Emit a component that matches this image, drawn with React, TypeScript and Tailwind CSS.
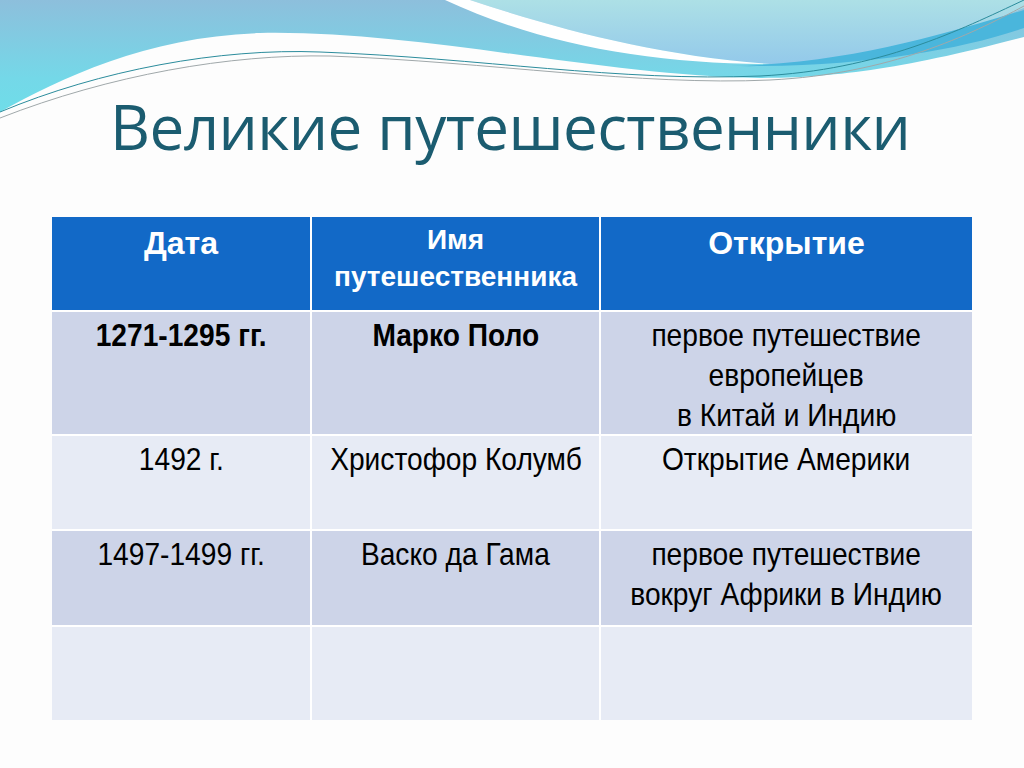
import React from "react";

const rows = [
  { date: "1271-1295 гг.", name: "Марко Поло", what: ["первое путешествие", "европейцев", "в Китай и Индию"], bold: true },
  { date: "1492 г.", name: "Христофор Колумб", what: ["Открытие Америки"] },
  { date: "1497-1499 гг.", name: "Васко да Гама", what: ["первое путешествие", "вокруг Африки в Индию"] },
  { date: "", name: "", what: [] as string[] },
];

function Waves() {
  return (
    <svg className="absolute left-0 top-0" width="1024" height="130" viewBox="0 0 1024 130">
      <defs>
        <linearGradient id="lb" x1="0" y1="0" x2="0" y2="1">
          <stop offset="0" stopColor="#8dbfdc" />
          <stop offset="0.7" stopColor="#74d8e8" />
          <stop offset="1" stopColor="#6fdde9" />
        </linearGradient>
        <linearGradient id="rb" x1="0" y1="0" x2="0" y2="1">
          <stop offset="0" stopColor="#ade0e6" />
          <stop offset="1" stopColor="#93c9ea" />
        </linearGradient>
      </defs>
      <path d="M0,0 H1024 V37 C900,70 830,78 760,78 C600,76 420,30 260,33 C150,36 60,78 0,112 Z" fill="url(#lb)" />
      <path d="M470,0 H1024 V8 C970,30 880,66 770,64 C660,56 560,30 470,0 Z" fill="url(#rb)" />
      <path d="M445,0 L470,0 C560,30 660,56 770,64 C650,64 540,44 445,0 Z" fill="#ffffff" />
      <path d="M730,66 C850,64 950,32 1024,10 L1024,28 C960,50 860,68 730,66 Z" fill="#4ab6dc" />
      <path d="M0,112 C100,70 220,48 320,52 C480,58 620,82 760,76 C880,70 960,30 1024,0" fill="none" stroke="#2b8c9c" strokeWidth="1" />
      <path d="M0,118 C110,75 230,54 330,56 C490,62 640,86 770,80 C890,74 970,35 1024,6" fill="none" stroke="#a0a8aa" strokeWidth="1" />
    </svg>
  );
}

function Txt({ children }: { children: React.ReactNode }) {
  return <span className="inline-block whitespace-nowrap scale-x-[0.88]">{children}</span>;
}

export default function App() {
  return (
    <div className="relative w-[1024px] h-[768px] overflow-hidden bg-[#fdfdfd]" style={{ fontFamily: "'Liberation Sans', Arial, sans-serif" }}>
      <Waves />
      <div className="relative pt-[86px] pl-[110px]">
        <h1 className="text-[62px] leading-[80px] tracking-[-0.6px] text-[#1b5c70]" style={{ fontFamily: "'Open Sans', sans-serif" }}>
          Великие путешественники
        </h1>
      </div>

      <div className="relative mt-[51px] ml-[52px] w-[920px] grid grid-cols-[258px_287px_371px] grid-rows-[93px_122px_93px_94px_93px] gap-[2px] bg-white">
        <div className="bg-[#1269c7] text-white font-bold text-[32px] leading-[36px] text-center pt-[8px]">Дата</div>
        <div className="bg-[#1269c7] text-white font-bold text-[28px] leading-[37px] text-center pt-[4px]">
          Имя
          <br />
          путешественника
        </div>
        <div className="bg-[#1269c7] text-white font-bold text-[32px] leading-[36px] text-center pt-[8px]">Открытие</div>

        {rows.map((r, i) => {
          const bg = i % 2 === 0 ? "bg-[#cdd4e8]" : "bg-[#e7ebf5]";
          const weight = r.bold ? "font-bold" : "font-normal";
          return (
            <React.Fragment key={i}>
              <div className={`${bg} ${weight} text-[32px] leading-[40px] text-center text-black pt-[3px]`}>
                {r.date && <Txt>{r.date}</Txt>}
              </div>
              <div className={`${bg} ${weight} text-[32px] leading-[40px] text-center text-black pt-[3px]`}>
                {r.name && <Txt>{r.name}</Txt>}
              </div>
              <div className={`${bg} text-[32px] leading-[40px] text-center text-black pt-[3px]`}>
                {r.what.map((t) => (
                  <div key={t}>
                    <Txt>{t}</Txt>
                  </div>
                ))}
              </div>
            </React.Fragment>
          );
        })}
      </div>
    </div>
  );
}
